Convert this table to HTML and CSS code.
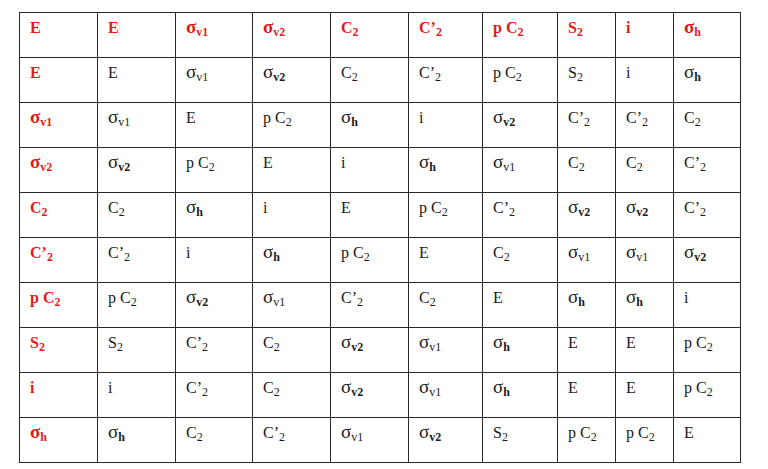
FILE: index.html
```
<!DOCTYPE html>
<html>
<head>
<meta charset="utf-8">
<link rel="stylesheet" href="styles.css">
</head>
<body>
<table class="grp">
<colgroup>
<col class="w78"><col class="w78"><col class="w77"><col class="w78"><col class="w78"><col class="w74"><col class="w75"><col class="w58"><col class="w58"><col class="w67">
</colgroup>
<tr class="hdr">
<td>E</td><td>E</td><td><span class="s">σ</span><sub>v1</sub></td><td><span class="s">σ</span><sub>v2</sub></td><td>C<sub>2</sub></td><td>C’<sub>2</sub></td><td>p C<sub>2</sub></td><td>S<sub>2</sub></td><td>i</td><td><span class="s">σ</span><sub>h</sub></td>
</tr>
<tr>
<th>E</th><td>E</td><td><span class="s">σ</span><sub>v1</sub></td><td><span class="s">σ</span><sub class="b">v2</sub></td><td>C<sub>2</sub></td><td>C’<sub>2</sub></td><td>p C<sub>2</sub></td><td>S<sub>2</sub></td><td>i</td><td><span class="s">σ</span><sub class="b">h</sub></td>
</tr>
<tr>
<th><span class="s">σ</span><sub>v1</sub></th><td><span class="s">σ</span><sub>v1</sub></td><td>E</td><td>p C<sub>2</sub></td><td><span class="s">σ</span><sub class="b">h</sub></td><td>i</td><td><span class="s">σ</span><sub class="b">v2</sub></td><td>C’<sub>2</sub></td><td>C’<sub>2</sub></td><td>C<sub>2</sub></td>
</tr>
<tr>
<th><span class="s">σ</span><sub>v2</sub></th><td><span class="s">σ</span><sub class="b">v2</sub></td><td>p C<sub>2</sub></td><td>E</td><td>i</td><td><span class="s">σ</span><sub class="b">h</sub></td><td><span class="s">σ</span><sub>v1</sub></td><td>C<sub>2</sub></td><td>C<sub>2</sub></td><td>C’<sub>2</sub></td>
</tr>
<tr>
<th>C<sub>2</sub></th><td>C<sub>2</sub></td><td><span class="s">σ</span><sub class="b">h</sub></td><td>i</td><td>E</td><td>p C<sub>2</sub></td><td>C’<sub>2</sub></td><td><span class="s">σ</span><sub class="b">v2</sub></td><td><span class="s">σ</span><sub class="b">v2</sub></td><td>C’<sub>2</sub></td>
</tr>
<tr>
<th>C’<sub>2</sub></th><td>C’<sub>2</sub></td><td>i</td><td><span class="s">σ</span><sub class="b">h</sub></td><td>p C<sub>2</sub></td><td>E</td><td>C<sub>2</sub></td><td><span class="s">σ</span><sub>v1</sub></td><td><span class="s">σ</span><sub>v1</sub></td><td><span class="s">σ</span><sub class="b">v2</sub></td>
</tr>
<tr>
<th>p C<sub>2</sub></th><td>p C<sub>2</sub></td><td><span class="s">σ</span><sub class="b">v2</sub></td><td><span class="s">σ</span><sub>v1</sub></td><td>C’<sub>2</sub></td><td>C<sub>2</sub></td><td>E</td><td><span class="s">σ</span><sub class="b">h</sub></td><td><span class="s">σ</span><sub class="b">h</sub></td><td>i</td>
</tr>
<tr>
<th>S<sub>2</sub></th><td>S<sub>2</sub></td><td>C’<sub>2</sub></td><td>C<sub>2</sub></td><td><span class="s">σ</span><sub class="b">v2</sub></td><td><span class="s">σ</span><sub>v1</sub></td><td><span class="s">σ</span><sub class="b">h</sub></td><td>E</td><td>E</td><td>p C<sub>2</sub></td>
</tr>
<tr>
<th>i</th><td>i</td><td>C’<sub>2</sub></td><td>C<sub>2</sub></td><td><span class="s">σ</span><sub class="b">v2</sub></td><td><span class="s">σ</span><sub>v1</sub></td><td><span class="s">σ</span><sub class="b">h</sub></td><td>E</td><td>E</td><td>p C<sub>2</sub></td>
</tr>
<tr>
<th><span class="s">σ</span><sub>h</sub></th><td><span class="s">σ</span><sub class="b">h</sub></td><td>C<sub>2</sub></td><td>C’<sub>2</sub></td><td><span class="s">σ</span><sub>v1</sub></td><td><span class="s">σ</span><sub class="b">v2</sub></td><td>S<sub>2</sub></td><td>p C<sub>2</sub></td><td>p C<sub>2</sub></td><td>E</td>
</tr>
</table>
</body>
</html>
```
FILE: styles.css
```
html, body {
  margin: 0;
  padding: 0;
  background: #ffffff;
}
body {
  font-family: "Liberation Serif", "Times New Roman", serif;
  font-size: 16px;
  color: #1a1a1a;
}
.grp {
  border-collapse: collapse;
  table-layout: fixed;
  width: 722px;
  margin: 12px 0 0 19px;
}
.w78 { width: 78px; }
.w77 { width: 77px; }
.w74 { width: 74px; }
.w75 { width: 75px; }
.w58 { width: 58px; }
.w67 { width: 67px; }
.grp tr {
  height: 45px;
}
.grp td, .grp th {
  border: 1px solid #2a2a2a;
  vertical-align: top;
  text-align: left;
  padding: 6px 0 0 10px;
  font-weight: normal;
  line-height: 18px;
  white-space: nowrap;
}
.grp th, .hdr td {
  color: #e01b1b;
  font-weight: bold;
}
.s {
  font-size: 19px;
  line-height: 0;
}
sub {
  font-size: 12px;
  vertical-align: -3px;
  line-height: 0;
}
sub.b {
  font-weight: bold;
}
```
